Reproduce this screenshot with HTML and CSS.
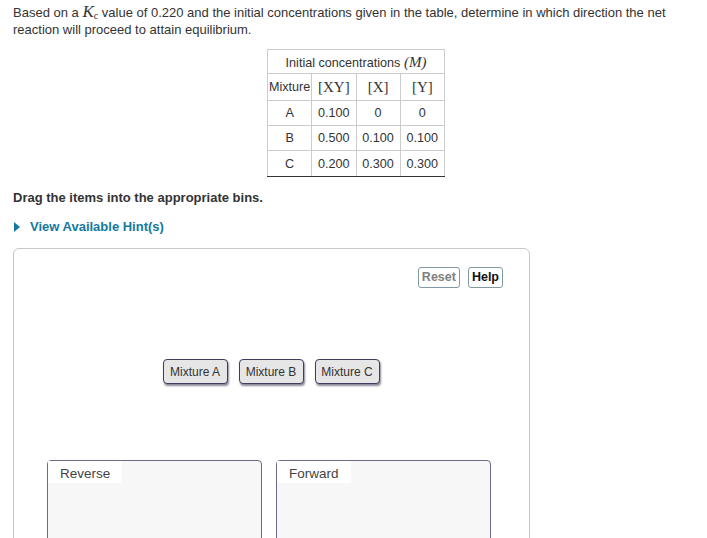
FILE: index.html
```html
<!DOCTYPE html>
<html>
<head>
<meta charset="utf-8">
<link rel="stylesheet" href="styles.css">
</head>
<body>
<div class="page">
  <p class="intro">Based on a <span class="math">K<sub>c</sub></span> value of 0.220 and the initial concentrations given in the table, determine in which direction the net reaction will proceed to attain equilibrium.</p>
  <div class="table-wrap">
    <table class="conc">
      <tr><th colspan="4" class="title">Initial concentrations <span class="mathi">(M)</span></th></tr>
      <tr><th class="mix">Mixture</th><th class="m">[XY]</th><th class="m">[X]</th><th class="m">[Y]</th></tr>
      <tr><td>A</td><td>0.100</td><td>0</td><td>0</td></tr>
      <tr><td>B</td><td>0.500</td><td>0.100</td><td>0.100</td></tr>
      <tr><td>C</td><td>0.200</td><td>0.300</td><td>0.300</td></tr>
    </table>
  </div>
  <p class="drag">Drag the items into the appropriate bins.</p>
  <div class="hint"><span class="tri"></span>View Available Hint(s)</div>
  <div class="board">
    <div class="tools"><span class="btn reset">Reset</span><span class="btn help">Help</span></div>
    <div class="items">
      <span class="tile">Mixture A</span>
      <span class="tile">Mixture B</span>
      <span class="tile">Mixture C</span>
    </div>
    <div class="bins">
      <div class="bin"><span class="label">Reverse</span></div>
      <div class="bin"><span class="label">Forward</span></div>
    </div>
  </div>
</div>
</body>
</html>
```
FILE: styles.css
```css
html, body { margin: 0; padding: 0; background: #fff; }
body { font-family: "Liberation Sans", Arial, Helvetica, sans-serif; color: #333; overflow: hidden; height: 538px; }
.page { padding: 5px 13px 0 13px; }
.intro { margin: 0; font-size: 13px; line-height: 16.5px; width: 675px; color: #333; }
.math { font-family: "Liberation Serif", "Times New Roman", serif; font-style: italic; font-size: 17px; line-height: 0; }
.math sub { font-size: 10px; font-style: normal; vertical-align: -2px; line-height: 0; }
.table-wrap { display: flex; padding-left: 254px; margin-top: 11px; }
.conc { border-collapse: collapse; font-size: 12.6px; color: #333; border: 1px solid #333; table-layout: fixed; width: 178px; }
.conc th, .conc td { border: 1px solid #ccc; text-align: center; font-weight: normal; padding: 0; white-space: nowrap; }
.conc .title { height: 22px; padding-top: 1px; }
.conc tr:nth-child(2) th { height: 26px; }
.conc td { height: 24px; }
.conc tr:last-child td { border-bottom: 1px solid #333; height: 25px; }
.conc .mix { width: 51px; }
.conc .m { font-family: "Liberation Serif", "Times New Roman", serif; font-size: 15px; }
.conc .m:nth-child(2) { width: 44px; }
.conc .m:nth-child(3) { width: 40px; }
.conc .m:nth-child(4) { width: 42px; }
.mathi { font-family: "Liberation Serif", "Times New Roman", serif; font-style: italic; font-size: 15px; }
.drag { margin: 13px 0 0 0; font-weight: bold; font-size: 13px; line-height: 16px; color: #333; }
.hint { margin-top: 13px; font-weight: bold; font-size: 13px; line-height: 16px; color: #14799f; display: flex; align-items: center; }
.tri { width: 0; height: 0; border-top: 5px solid transparent; border-bottom: 5px solid transparent; border-left: 6px solid #14799f; margin: 0 10px 0 1px; }
.board { margin-top: 13px; width: 517px; height: 320px; border: 1px solid #c8c8c8; border-radius: 6px; box-sizing: border-box; }
.tools { display: flex; justify-content: flex-end; gap: 8px; padding: 18px 26px 0 0; }
.btn { font-size: 12.5px; line-height: 17px; padding: 1px 3px; border: 1px solid #7f9aa0; border-radius: 3px; font-weight: bold; }
.reset { color: #808080; }
.help { color: #111; }
.items { display: flex; justify-content: center; gap: 11px; margin-top: 71px; }
.tile { font-size: 12px; line-height: 16px; padding: 4px 5px 3px 4px; width: 54px; text-align: center; background: #e6e6e6; border: 1px solid #3e3e5a; border-radius: 4px; box-shadow: 1px 2px 2px rgba(40,40,70,0.55); color: #333; height: 16px; }
.bins { display: flex; gap: 14px; margin-top: 76px; padding-left: 33px; }
.bin { width: 215px; height: 120px; background: #f7f7f7; border: 1px solid #6a6a86; border-radius: 4px 4px 0 0; box-sizing: border-box; }
.label { display: inline-block; background: #fff; font-size: 13.5px; line-height: 18px; padding: 4px 10px 0 12px; width: 52px; color: #444; }
```
